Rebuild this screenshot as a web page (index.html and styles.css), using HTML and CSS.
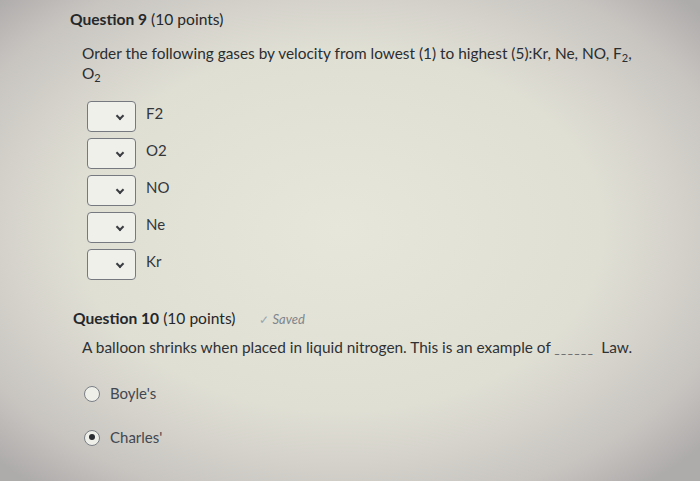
FILE: index.html
```html
<!DOCTYPE html>
<html>
<head>
<meta charset="utf-8">
<link rel="stylesheet" href="styles.css">
</head>
<body>
<div class="page">
  <div class="q9">
    <div class="qhead"><b>Question 9</b> (10 points)</div>
    <div class="qtext">Order the following gases by velocity from lowest (1) to highest (5):Kr, Ne, NO, F<sub>2</sub>,<br>O<sub>2</sub></div>
    <div class="matches">
      <div class="mrow"><div class="sel"><span class="chev"></span></div><span class="lbl">F2</span></div>
      <div class="mrow"><div class="sel"><span class="chev"></span></div><span class="lbl">O2</span></div>
      <div class="mrow"><div class="sel"><span class="chev"></span></div><span class="lbl">NO</span></div>
      <div class="mrow"><div class="sel"><span class="chev"></span></div><span class="lbl">Ne</span></div>
      <div class="mrow"><div class="sel"><span class="chev"></span></div><span class="lbl">Kr</span></div>
    </div>
  </div>
  <div class="q10">
    <div class="qhead"><b>Question 10</b> (10 points) <span class="saved"><span class="check">✓</span> Saved</span></div>
    <div class="qtext2">A balloon shrinks when placed in liquid nitrogen. This is an example of <span class="blank">______</span> Law.</div>
    <div class="opts">
      <div class="opt"><span class="radio"></span><span>Boyle's</span></div>
      <div class="opt"><span class="radio on"></span><span>Charles'</span></div>
    </div>
  </div>
</div>
</body>
</html>
```
FILE: styles.css
```css
html, body {
  margin: 0;
  padding: 0;
  width: 700px;
  height: 481px;
  overflow: hidden;
}
body {
  background: radial-gradient(ellipse 480px 330px at 340px 230px, #e6e6da 0%, #e0dfd4 55%, #c8c5c1 85%, #aeabab 100%);
  font-family: Lato, "Open Sans", sans-serif;
  color: #2e3134;
}
.page {
  padding: 9px 0 0 70px;
}
.qhead {
  font-size: 15.6px;
  color: #25282b;
  line-height: 20px;
}
.qhead b { font-weight: 700; }
.qtext {
  margin: 14px 0 0 12px;
  font-size: 15.4px;
  line-height: 20px;
  color: #2b2e31;
}
.qtext sub {
  font-size: 11px;
  vertical-align: -3px;
  line-height: 0;
}
.matches {
  margin: 18px 0 0 17px;
  display: flex;
  flex-direction: column;
  gap: 6px;
}
.mrow {
  display: flex;
  align-items: flex-start;
  gap: 10px;
}
.sel {
  width: 47px;
  height: 29px;
  border: 1.5px solid #767a80;
  border-radius: 4px;
  background: #f0f0ea;
  position: relative;
}
.chev {
  position: absolute;
  left: 29px;
  top: 11px;
  width: 4px;
  height: 4px;
  border-right: 2px solid #3a3d42;
  border-bottom: 2px solid #3a3d42;
  transform: rotate(45deg);
}
.lbl {
  font-size: 15px;
  line-height: 18px;
  color: #33363a;
  margin-top: 3px;
}
.q10 {
  margin-top: 28px;
  padding-left: 3px;
}
.saved {
  font-style: italic;
  font-size: 13px;
  color: #7f858c;
  margin-left: 20px;
}
.check {
  font-style: normal;
  color: #98a6b0;
  font-size: 12px;
}
.qtext2 {
  margin: 7px 0 0 9px;
  font-size: 15.4px;
  line-height: 20px;
  color: #2f3235;
}
.blank { font-size: 11px; line-height: 0; letter-spacing: 1.6px; margin-right: 3px; color: #4a4e54; }
.opts {
  margin: 27px 0 0 11px;
  display: flex;
  flex-direction: column;
  gap: 25px;
}
.opt {
  display: flex;
  align-items: center;
  gap: 10px;
  font-size: 15px;
  color: #424750;
  line-height: 19px;
}
.radio {
  width: 16px;
  height: 16px;
  border: 1.5px solid #7a7f86;
  border-radius: 50%;
  background: #efefea;
  position: relative;
  box-sizing: border-box;
}
.radio.on::after {
  content: "";
  position: absolute;
  left: 3.5px;
  top: 3.5px;
  width: 6px;
  height: 6px;
  border-radius: 50%;
  background: #2a2d32;
}
```
